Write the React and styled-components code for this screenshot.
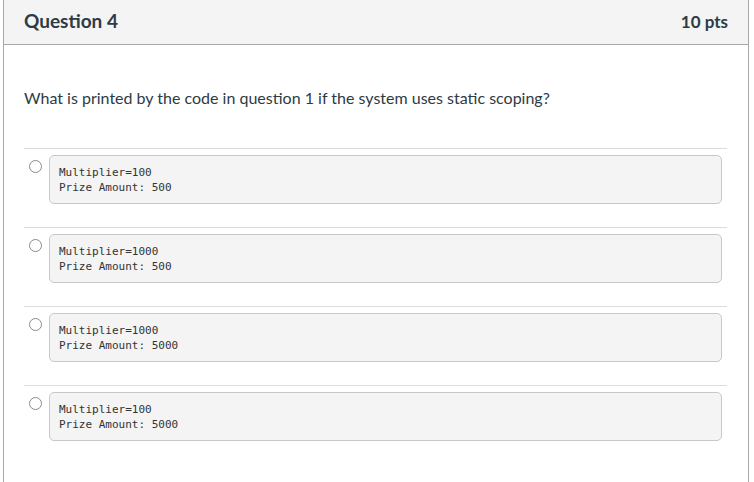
import React from 'react';
import styled, { createGlobalStyle } from 'styled-components';

const GlobalStyle = createGlobalStyle`
  body {
    margin: 0;
    background: #fff;
    font-family: Lato, "Open Sans", sans-serif;
  }
`;

const Frame = styled.div`
  margin-left: 3px;
  width: 744px;
  height: 482px;
  border-left: 1px solid #a8a8a8;
  border-right: 1px solid #a8a8a8;
  box-sizing: content-box;
  background: #fff;
`;

const Header = styled.div`
  height: 44px;
  background: #f4f4f4;
  border-bottom: 1px solid #a8a8a8;
  display: flex;
  align-items: center;
  justify-content: space-between;
  padding: 0 20px;
`;

const Title = styled.h2`
  margin: 0;
  font-size: 19px;
  font-weight: 700;
  color: #2d3b45;
  margin-top: -3px;
`;

const Points = styled.span`
  font-size: 17px;
  font-weight: 700;
  color: #2d3b45;
  margin-top: -1px;
`;

const Body = styled.div`
  padding: 41px 21px 0 20px;
`;

const QuestionText = styled.p`
  margin: 0 0 38px;
  font-size: 16px;
  color: #2d3b45;
  line-height: 24px;
`;

const Answer = styled.div`
  border-top: 1px solid #dcdcdc;
  padding: 6px 0 23px;
  display: flex;
  align-items: flex-start;
`;

const Radio = styled.span`
  width: 11px;
  height: 11px;
  border: 1px solid #8a8a8a;
  border-radius: 50%;
  margin: 5px 0 0 5px;
  flex-shrink: 0;
  background: #fff;
`;

const CodeBox = styled.pre`
  margin: 0 5px 0 7px;
  flex: 1;
  background: #f4f4f4;
  border: 1px solid #c8c8c8;
  border-radius: 5px;
  padding: 9px 9px 8px;
  font-family: "DejaVu Sans Mono", "Liberation Mono", monospace;
  font-size: 11px;
  line-height: 15px;
  color: #333;
  white-space: pre;
`;

const answers = [
  'Multiplier=100\nPrize Amount: 500',
  'Multiplier=1000\nPrize Amount: 500',
  'Multiplier=1000\nPrize Amount: 5000',
  'Multiplier=100\nPrize Amount: 5000',
];

export default function App() {
  return (
    <>
      <GlobalStyle />
      <Frame>
        <Header>
          <Title>Question 4</Title>
          <Points>10 pts</Points>
        </Header>
        <Body>
          <QuestionText>
            What is printed by the code in question 1 if the system uses static scoping?
          </QuestionText>
          {answers.map((a) => (
            <Answer key={a}>
              <Radio />
              <CodeBox>{a}</CodeBox>
            </Answer>
          ))}
        </Body>
      </Frame>
    </>
  );
}
